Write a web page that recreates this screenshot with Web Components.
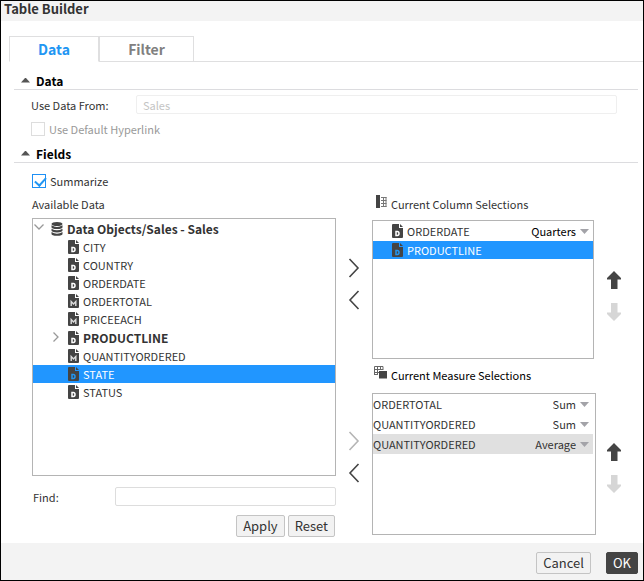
<!DOCTYPE html>
<html lang="en">
<head>
<meta charset="utf-8">
<title>Table Builder</title>
<style>
  body { margin: 0; font: 11px/18px "Noto Sans CJK SC", "Open Sans", sans-serif; color: #333; background: #fff; }
</style>
</head>
<body>
<tb-dialog heading="Table Builder">
  <tb-tabs></tb-tabs>
  <tb-section heading="Data"><tb-source></tb-source></tb-section>
  <tb-section heading="Fields" class="grow"><tb-fields></tb-fields></tb-section>
  <tb-button slot="footer">Cancel</tb-button>
  <tb-button slot="footer" primary>OK</tb-button>
</tb-dialog>

<script>
const base = `*{box-sizing:border-box} button,input,select{font:inherit;color:inherit;margin:0}`;
const define = (name, render) => customElements.define(name, class extends HTMLElement {
  connectedCallback() {
    if (this.shadowRoot) return;
    this.attachShadow({ mode: 'open' }).innerHTML = render(this);
  }
});

define('tb-dialog', el => `<style>${base}
  :host{display:flex;flex-direction:column;box-sizing:border-box;min-height:100vh;border:1px solid #000}
  header{background:#f3f3f3;padding:0 3px;height:20px}
  h1{margin:0;font-size:13px;line-height:16px;font-weight:700}
  main{flex:1;display:flex;flex-direction:column;padding-top:15px}
  ::slotted(.grow){flex:1}
  footer{display:flex;justify-content:flex-end;gap:15px;background:#f3f3f3;padding:9px 5px 6px}
  </style><header><h1>${el.getAttribute('heading')}</h1></header><main><slot></slot></main><footer><slot name="footer"></slot></footer>`);

define('tb-tabs', () => `<style>${base}
  :host{display:block;padding-left:8px}
  div{display:flex}
  div::after{content:"";flex:1;border-bottom:1px solid #dfdfe0}
  button{height:26px;line-height:22px;padding:0;border:1px solid #dfdfe0;background:#fff;font-size:14px;font-weight:700;color:#808080;width:95px}
  button[aria-selected=true]{color:#2196f3;border-bottom-color:#fff;width:90px}
  </style><div role="tablist"><button role="tab" aria-selected="true">Data</button><button role="tab" aria-selected="false">Filter</button></div>`);

define('tb-section', el => `<style>${base}
  :host{display:flex;flex-direction:column}
  h2{display:flex;align-items:center;gap:6px;margin:10px 5px 0 13px;padding:0 0 0 7px;height:18px;border-bottom:1px solid #dcdcdf;font-size:12px;line-height:18px;color:#000}
  :host(.grow) h2{margin-top:5px}
  svg{display:block}
  ::slotted(*){flex:1}
  </style><h2><svg width="9" height="5" viewBox="0 0 9 5"><path d="M0 4.5L4 0H5L9 4.5Z" fill="#555"/></svg>${el.getAttribute('heading')}</h2><slot></slot>`);

define('tb-check', el => `<style>${base}
  :host{display:block}
  label{display:inline-flex;align-items:center;gap:4px;line-height:18px}
  input{appearance:none;width:14px;height:14px;border:1px solid #1e90f5;background:#fff;display:grid}
  input:checked::after{content:"";width:5px;height:9px;margin:0 0 0 4px;border:solid #2196f3;border-width:0 2px 2px 0;transform:rotate(42deg)}
  :host([disabled]) label{color:#999} :host([disabled]) input{border-color:#ddd}
  </style><label><input type="checkbox" ${el.hasAttribute('checked') ? 'checked' : ''} ${el.hasAttribute('disabled') ? 'disabled' : ''}><slot></slot></label>`);

define('tb-source', () => `<style>${base}
  :host{display:block;padding:5px 26px 0 30px}
  .row{display:grid;grid-template-columns:105px 1fr;align-items:center}
  input{width:100%;height:19px;border:1px solid #efefef;border-radius:2px;padding:0 6px;background:#fff;color:#c4c4c4}
  tb-check{margin-top:6px}
  </style><div class="row"><label for="src">Use Data From:</label><input id="src" value="Sales" disabled></div>
  <tb-check disabled>Use Default Hyperlink</tb-check>`);

define('tb-button', el => `<style>${base}
  :host{display:block}
  button{display:block;height:22px;line-height:18px;padding:0 6px;border:1px solid #c4c4c4;border-radius:2px;background:#f2f2f2;font-size:13px}
  :host([primary]) button{background:#444;border-color:#444;color:#fff}
  </style><button type="button"><slot></slot></button>`);

const glyphs = {
  right: ['#444', 'M3.5 3L12 12L3.5 21', 0], left: ['#444', 'M12.5 3L4 12L12.5 21', 0],
  up: ['#444', 'M8 3L15 10V11.5H11.5V21H5V11.5H1V10Z', 1], down: ['#d6d6d6', 'M8 21L15 14V12.5H11.5V3H5V12.5H1V14Z', 1]
};
define('tb-arrow', el => {
  const [color, d, solid] = glyphs[el.getAttribute('dir')];
  const c = el.hasAttribute('disabled') ? (solid ? color : '#b5b5b5') : color;
  return `<style>${base}
  :host{display:block}
  button{display:flex;align-items:center;justify-content:center;width:100%;height:32px;padding:0;border:0;background:none}
  </style><button type="button" aria-label="Move ${el.getAttribute('dir')}" ${el.hasAttribute('disabled') ? 'disabled' : ''}><svg width="16" height="24" viewBox="0 0 16 24"><path d="${d}" ${solid ? `fill="${c}"` : `fill="none" stroke="${c}" stroke-width="1.6"`}/></svg></button>`;
});

define('tb-file-icon', el => `<style>:host{display:block;flex:none;width:11px;height:14px} svg{display:block}</style>
  <svg width="11" height="14" viewBox="0 0 11 14"><path d="M1 0H7V4H11V13Q11 14 10 14H1Q0 14 0 13V1Q0 0 1 0Z" fill="#444"/><path d="M8 0L11 3H8Z" fill="#444"/>
  ${el.getAttribute('kind') === 'M'
    ? '<path d="M3.2 12V7.5L5.5 10L7.8 7.5V12" fill="none" stroke="#ddd" stroke-width="1.4"/>'
    : `<path d="M4 7.5H5.3Q7 7.5 7 9.5Q7 11.5 5.3 11.5H4Z" fill="none" stroke="${el.hasAttribute('selected') ? '#2196f3' : '#fff'}" stroke-width="1.5"/>`}</svg>`);

define('tb-node', el => {
  const sel = el.hasAttribute('selected'), kind = el.getAttribute('kind'), open = el.getAttribute('twisty');
  const tw = open ? `<svg width="10" height="10" viewBox="0 0 10 10"><path d="${open === 'open' ? 'M.5 1.5L5 6L9.5 1.5' : 'M.5 .5L5 5L.5 9.5'}" fill="none" stroke="#999" stroke-width="1.3"/></svg>` : '';
  const icon = kind === 'db'
    ? `<svg width="12" height="14" viewBox="0 0 12 14"><g fill="#444"><ellipse cx="6" cy="2" rx="5.5" ry="2"/><path d="M.5 3.3Q6 6.6 11.5 3.3V5.2Q11.5 7 6 7T.5 5.2Z"/><path d="M.5 6.7Q6 10 11.5 6.7V8.6Q11.5 10.4 6 10.4T.5 8.6Z"/><path d="M.5 10.1Q6 13.4 11.5 10.1V12Q11.5 13.8 6 13.8T.5 12Z"/></g></svg>`
    : `<tb-file-icon kind="${kind}" ${sel ? 'selected' : ''}></tb-file-icon>`;
  return `<style>
  :host{display:flex;align-items:center;gap:4px;height:18px;padding-left:20px}
  :host([bold]){font-weight:700;font-size:12px;height:19px}
  :host([kind=db]){height:19px;padding-left:1px}
  :host([selected]){background:#2196ff;color:#fff}
  :host([list]){padding-left:4px} :host([list]:not([selected])){height:20px}
  .t{width:11px;height:12px;flex:none} :host([kind=db]) .t{width:13px}
  svg{display:block} .n{flex:1}
  </style><span class="t">${tw}</span>${icon}<span class="n"><slot></slot></span><slot name="end"></slot>`;
});

define('tb-select', el => `<style>${base}
  :host{display:flex;align-items:center;gap:4px;padding-right:4px}
  select{appearance:none;border:0;background:none;padding:0;height:18px;text-align-last:right;field-sizing:content}
  svg{display:block}
  </style><select aria-label="${el.getAttribute('label')}">${el.getAttribute('options').split(',').map((o, i) => `<option ${i ? '' : 'selected'}>${o}</option>`).join('')}</select><svg width="9" height="5" viewBox="0 0 9 5"><path d="M0 0H9L4.5 5Z" fill="#a3a3a8"/></svg>`);

define('tb-measure', () => `<style>
  :host{display:flex;align-items:center;justify-content:space-between;height:20px;margin-right:2px}
  :host([current]){background:#e0e0e0}
  </style><span><slot></slot></span><slot name="end"></slot>`);

define('tb-find', () => `<style>${base}
  :host{display:grid;gap:9px}
  .row{display:grid;grid-template-columns:83px 1fr;align-items:center}
  label{padding-left:1px}
  input{width:100%;height:19px;border:1px solid #ddd;border-radius:2px;background:#fff;padding:0 4px}
  .actions{display:flex;justify-content:flex-end;gap:3px;padding-right:1px}
  </style><div class="row"><label for="find">Find:</label><input id="find"></div><div class="actions"><tb-button>Apply</tb-button><tb-button>Reset</tb-button></div>`);

define('tb-fields', () => `<style>${base}
  :host{display:flex;flex-direction:column;padding:9px 0 0 31px}
  tb-check{margin-bottom:3px}
  .grid{flex:1;display:grid;grid-template:"a t1 c o1" 166fr "a t2 m o2" 184fr / 19fr 36px 14fr 47px}
  .a{grid-area:a;display:flex;flex-direction:column;padding-bottom:6px}
  .c{grid-area:c;display:flex;flex-direction:column;padding-right:2px}
  .m{grid-area:m;display:flex;flex-direction:column;padding-bottom:8px}
  h3{margin:0;font:inherit;line-height:18px;display:flex;align-items:flex-start}
  .a h3{height:25px;padding-top:2px}
  .c h3{height:27px;padding:2px 0 0 4px;gap:4px}
  .m h3{height:34px;padding:7px 0 0 2px;gap:3px;color:#000}
  .box{flex:1;border:1px solid #b4b4b4;background:#fff}
  tb-find{margin-top:11px}
  svg{display:block;flex:none}
  .t1{grid-area:t1;padding-top:59px}.t2{grid-area:t2;padding-top:66px}
  .o1{grid-area:o1;padding:71px 11px 0 0}.o2{grid-area:o2;padding:77px 11px 0 0}
  tb-select.dark{color:#000}
  </style>
  <tb-check checked>Summarize</tb-check>
  <div class="grid">
    <div class="a"><h3>Available Data</h3>
      <div class="box">
        <tb-node kind="db" twisty="open" bold>Data Objects/Sales - Sales</tb-node>
        <tb-node kind="D">CITY</tb-node><tb-node kind="D">COUNTRY</tb-node><tb-node kind="D">ORDERDATE</tb-node>
        <tb-node kind="M">ORDERTOTAL</tb-node><tb-node kind="M">PRICEEACH</tb-node>
        <tb-node kind="D" twisty="closed" bold>PRODUCTLINE</tb-node>
        <tb-node kind="M">QUANTITYORDERED</tb-node><tb-node kind="D" selected>STATE</tb-node><tb-node kind="D">STATUS</tb-node>
      </div>
      <tb-find></tb-find>
    </div>
    <div class="t1"><tb-arrow dir="right"></tb-arrow><tb-arrow dir="left"></tb-arrow></div>
    <div class="c"><h3><svg width="11" height="13" viewBox="0 0 11 13"><path d="M0 0H4V13H0Z" fill="#444"/><path d="M5 2.5H10.5M5 5.5H10.5M5 8.5H10.5M5 11.5H10.5M7.5 2V12M10 2V12" stroke="#777" fill="none"/></svg>Current Column Selections</h3>
      <div class="box">
        <tb-node kind="D" list>ORDERDATE<tb-select slot="end" class="dark" label="Date grouping" options="Quarters,Years,Months"></tb-select></tb-node>
        <tb-node kind="D" list selected>PRODUCTLINE</tb-node>
      </div>
    </div>
    <div class="o1"><tb-arrow dir="up"></tb-arrow><tb-arrow dir="down" disabled></tb-arrow></div>
    <div class="t2"><tb-arrow dir="right" disabled></tb-arrow><tb-arrow dir="left"></tb-arrow></div>
    <div class="m"><h3><svg width="14" height="13" viewBox="0 0 14 13"><path d="M.5 .5H9M.5 3.5H9M.5 6.5H5M.5 8.5H4M.5 .5V9M3.5 .5V9M6.5 .5V4M9 .5V4" stroke="#666" fill="none"/><path d="M5 5H13V12.5H5Z" fill="#444"/></svg>Current Measure Selections</h3>
      <div class="box">
        <tb-measure>ORDERTOTAL<tb-select slot="end" label="Aggregate 1" options="Sum,Average,Count"></tb-select></tb-measure>
        <tb-measure>QUANTITYORDERED<tb-select slot="end" label="Aggregate 2" options="Sum,Average,Count"></tb-select></tb-measure>
        <tb-measure current>QUANTITYORDERED<tb-select slot="end" label="Aggregate 3" options="Average,Sum,Count"></tb-select></tb-measure>
      </div>
    </div>
    <div class="o2"><tb-arrow dir="up"></tb-arrow><tb-arrow dir="down" disabled></tb-arrow></div>
  </div>`);
</script>
</body>
</html>
